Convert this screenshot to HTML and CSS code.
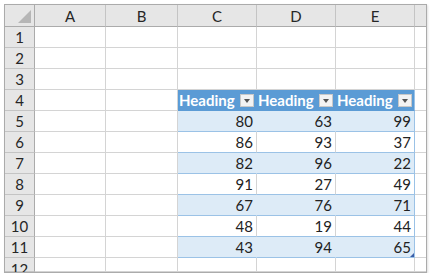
FILE: index.html
```html
<!DOCTYPE html>
<html lang="en">
<head>
    <meta charset="UTF-8">
    <title>Sheet</title>
    <link rel="stylesheet" href="styles.css">
</head>
<body>
    <div class="sheet">
        <!-- Cabecera de columnas -->
        <div class="cell corner"><span class="corner-mark"></span></div>
        <div class="cell col-head">A</div>
        <div class="cell col-head">B</div>
        <div class="cell col-head">C</div>
        <div class="cell col-head">D</div>
        <div class="cell col-head">E</div>
        <div class="cell col-head"></div>

        <div class="cell row-head">1</div>
        <div class="cell"></div><div class="cell"></div><div class="cell"></div><div class="cell"></div><div class="cell"></div><div class="cell"></div>

        <div class="cell row-head">2</div>
        <div class="cell"></div><div class="cell"></div><div class="cell"></div><div class="cell"></div><div class="cell"></div><div class="cell"></div>

        <div class="cell row-head">3</div>
        <div class="cell"></div><div class="cell"></div><div class="cell"></div><div class="cell"></div><div class="cell"></div><div class="cell"></div>

        <div class="cell row-head">4</div>
        <div class="cell"></div><div class="cell"></div>
        <div class="cell th">Heading<span class="filter"></span></div>
        <div class="cell th">Heading<span class="filter"></span></div>
        <div class="cell th last">Heading<span class="filter"></span></div>
        <div class="cell"></div>

        <div class="cell row-head">5</div>
        <div class="cell"></div><div class="cell"></div>
        <div class="cell td band">80</div><div class="cell td band">63</div><div class="cell td band last">99</div>
        <div class="cell"></div>

        <div class="cell row-head">6</div>
        <div class="cell"></div><div class="cell"></div>
        <div class="cell td">86</div><div class="cell td">93</div><div class="cell td last">37</div>
        <div class="cell"></div>

        <div class="cell row-head">7</div>
        <div class="cell"></div><div class="cell"></div>
        <div class="cell td band">82</div><div class="cell td band">96</div><div class="cell td band last">22</div>
        <div class="cell"></div>

        <div class="cell row-head">8</div>
        <div class="cell"></div><div class="cell"></div>
        <div class="cell td">91</div><div class="cell td">27</div><div class="cell td last">49</div>
        <div class="cell"></div>

        <div class="cell row-head">9</div>
        <div class="cell"></div><div class="cell"></div>
        <div class="cell td band">67</div><div class="cell td band">76</div><div class="cell td band last">71</div>
        <div class="cell"></div>

        <div class="cell row-head">10</div>
        <div class="cell"></div><div class="cell"></div>
        <div class="cell td">48</div><div class="cell td">19</div><div class="cell td last">44</div>
        <div class="cell"></div>

        <div class="cell row-head">11</div>
        <div class="cell"></div><div class="cell"></div>
        <div class="cell td band">43</div><div class="cell td band">94</div><div class="cell td band last">65<span class="handle"></span></div>
        <div class="cell"></div>

        <div class="cell row-head cut">12</div>
        <div class="cell"></div><div class="cell"></div><div class="cell"></div><div class="cell"></div><div class="cell"></div><div class="cell"></div>
    </div>
</body>
</html>
```

FILE: styles.css
```css
* {
    margin: 0;
    padding: 0;
    box-sizing: border-box;
}

body {
    background: #fff;
    font-family: 'Lato', 'Liberation Sans', sans-serif;
    padding: 4px 0 0 4px;
}

/* Rejilla de la hoja */
.sheet {
    display: grid;
    grid-template-columns: 30px 71px 72px 79px 79px 79px 11px;
    grid-template-rows: 22px repeat(11, 21px) 14px;
    width: 423px;
    height: 269px;
    border: 1px solid #ababab;
    overflow: hidden;
    box-shadow: 1px 1px 2px rgba(0, 0, 0, 0.12);
}

.cell {
    border-right: 1px solid #d4d4d4;
    border-bottom: 1px solid #d4d4d4;
    font-size: 15px;
    color: #222;
    position: relative;
}

.cell:nth-child(7n) {
    border-right: none;
}

.col-head,
.row-head,
.corner {
    background: #e6e6e6;
    border-color: #c4c4c4;
    display: flex;
    align-items: center;
    justify-content: center;
    font-size: 15px;
    color: #262626;
}

.col-head {
    border-bottom-color: #ababab;
}

.row-head {
    border-right-color: #ababab;
}

.row-head.cut {
    align-items: flex-start;
    padding-top: 2px;
}

.corner {
    border-right-color: #ababab;
    border-bottom-color: #ababab;
}

.corner-mark {
    position: absolute;
    right: 3px;
    bottom: 3px;
    width: 0;
    height: 0;
    border-left: 13px solid transparent;
    border-bottom: 13px solid #b6b6b6;
}

/* Tabla */
.th {
    background: #5b9bd5;
    border-right-color: #5b9bd5;
    border-bottom-color: #5b9bd5;
    color: #fff;
    font-weight: bold;
    font-size: 15px;
    display: flex;
    align-items: center;
    padding-left: 1px;
}

.filter {
    position: absolute;
    right: 2px;
    top: 4px;
    width: 14px;
    height: 13px;
    background: #f3f3f3;
    border: 1px solid #c8c8c8;
}

.filter::after {
    content: '';
    position: absolute;
    left: 3px;
    top: 4px;
    border-left: 3.5px solid transparent;
    border-right: 3.5px solid transparent;
    border-top: 4px solid #555;
}

.td {
    display: flex;
    align-items: center;
    justify-content: flex-end;
    padding-right: 3px;
    border-bottom-color: #9bc2e6;
}

.td.band {
    background: #ddebf7;
    border-right-color: #ddebf7;
}

.td.last,
.th.last {
    border-right-color: #9bc2e6;
}

.handle {
    position: absolute;
    right: 0;
    bottom: 0;
    width: 0;
    height: 0;
    border-left: 4px solid transparent;
    border-bottom: 4px solid #3a5ea8;
}
```
